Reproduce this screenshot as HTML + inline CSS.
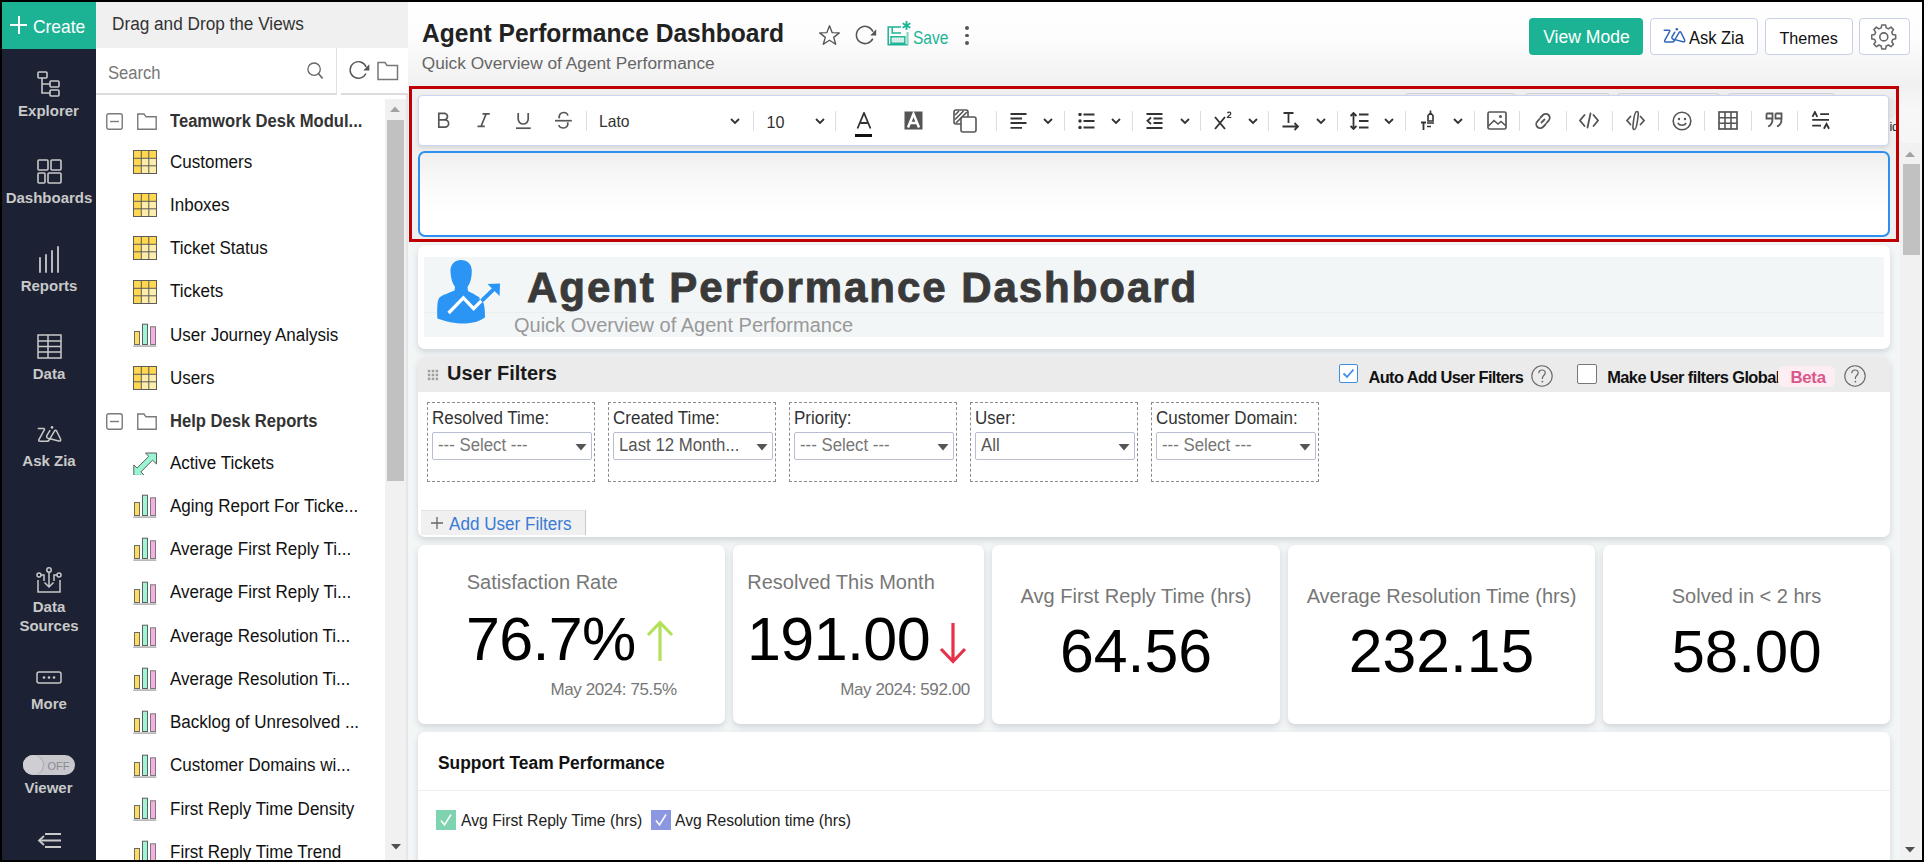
<!DOCTYPE html>
<html><head><meta charset="utf-8"><title>Agent Performance Dashboard</title>
<style>
html,body{margin:0;padding:0;width:1924px;height:862px;overflow:hidden;background:#000;}
body{position:relative;font-family:"Liberation Sans",sans-serif;}
.t{position:absolute;white-space:nowrap;}
.r{position:absolute;display:block;}
</style></head><body>
<div class="r" style="left:0px;top:0px;width:1924px;height:862px;background:#000;"></div>
<div class="r" style="left:2px;top:2px;width:1920px;height:858px;background:#fff;"></div>
<div class="r" style="left:2px;top:2px;width:94px;height:858px;background:#1c2233;"></div>
<div class="r" style="left:2px;top:2px;width:94px;height:47px;background:#1bb394;"></div>
<div class="r" style="left:10px;top:24px;width:17px;height:2px;background:#fff;"></div>
<div class="r" style="left:17.5px;top:16px;width:2px;height:18px;background:#fff;"></div>
<div class="t" style="left:33px;top:16.62px;font-size:19px;line-height:19px;color:#fff;font-weight:400;transform:scaleX(0.916);transform-origin:0 0;">Create</div>
<svg class="r" style="left:37px;top:71px;" width="26" height="27" viewBox="0 0 26 27"><g fill="none" stroke="#c9c9c9" stroke-width="1.6">
<rect x="1" y="1" width="9" height="6" rx="1"/><rect x="13" y="10" width="9" height="6" rx="1"/><rect x="13" y="19" width="9" height="6" rx="1"/>
<path d="M5 7 V22 H13 M5 13 H13"/></g></svg>
<div class="t" style="left:48.5px;transform:translateX(-50%);top:103.00px;font-size:15px;line-height:15px;color:#c9c9c9;font-weight:700;">Explorer</div>
<svg class="r" style="left:37px;top:159px;" width="25" height="25" viewBox="0 0 25 25"><g fill="none" stroke="#c9c9c9" stroke-width="1.6">
<rect x="1" y="1" width="10" height="10" rx="1"/><rect x="14" y="1" width="10" height="10" rx="1"/>
<rect x="1" y="14" width="7" height="10" rx="1"/><rect x="11" y="14" width="13" height="10" rx="1"/></g></svg>
<div class="t" style="left:49px;transform:translateX(-50%);top:190.30px;font-size:15px;line-height:15px;color:#c9c9c9;font-weight:700;">Dashboards</div>
<svg class="r" style="left:38px;top:246px;" width="22" height="27" viewBox="0 0 22 27"><g stroke="#c9c9c9" stroke-width="1.8" stroke-linecap="round">
<path d="M2 12 V26 M8 9 V26 M14 5 V26 M20 1 V26"/></g></svg>
<div class="t" style="left:49px;transform:translateX(-50%);top:278.30px;font-size:15px;line-height:15px;color:#c9c9c9;font-weight:700;">Reports</div>
<svg class="r" style="left:37px;top:334px;" width="25" height="25" viewBox="0 0 25 25"><g fill="none" stroke="#c9c9c9" stroke-width="1.5">
<rect x="1" y="1" width="23" height="23"/><path d="M1 7 H24 M1 12.5 H24 M1 18 H24 M11 1 V24"/></g></svg>
<div class="t" style="left:49px;transform:translateX(-50%);top:365.80px;font-size:15px;line-height:15px;color:#c9c9c9;font-weight:700;">Data</div>
<svg class="r" style="left:37px;top:425px;" width="26" height="19" viewBox="0 0 26 19"><g fill="none" stroke="#c9c9c9" stroke-width="1.5" stroke-linejoin="round" stroke-linecap="round">
<path d="M1.3 3.6 H6.6 Q7.9 3.6 7.3 4.8 L1.9 14.6 Q1.2 16.3 3 16.3 H10.2 Q11 16.3 11.5 15.5"/>
<path d="M12.8 5.6 L9.8 10.6 Q9.1 12.6 11.4 13.4 L13 14"/>
<path d="M11.6 15.8 L17.6 5.8 Q18.6 4.4 19.6 6 L23.5 14 Q24.3 16.4 21.7 16 L13 13.7"/></g>
<circle cx="15" cy="2.4" r="1.3" fill="#c9c9c9"/></svg>
<div class="t" style="left:49px;transform:translateX(-50%);top:453.30px;font-size:15px;line-height:15px;color:#c9c9c9;font-weight:700;">Ask Zia</div>
<svg class="r" style="left:36px;top:567px;" width="26" height="27" viewBox="0 0 26 27"><g fill="none" stroke="#c9c9c9" stroke-width="1.5">
<circle cx="13" cy="3" r="2.2"/><path d="M13 5.2 V20 M8.5 15.5 L13 20 L17.5 15.5"/>
<circle cx="3" cy="8" r="2"/><path d="M5 8 H8 V14"/><circle cx="23" cy="8" r="2"/><path d="M21 8 H18 V14"/>
<path d="M2 13 V25 H24 V13"/></g></svg>
<div class="t" style="left:49px;transform:translateX(-50%);top:598.90px;font-size:15px;line-height:15px;color:#c9c9c9;font-weight:700;">Data</div>
<div class="t" style="left:49px;transform:translateX(-50%);top:617.80px;font-size:15px;line-height:15px;color:#c9c9c9;font-weight:700;">Sources</div>
<svg class="r" style="left:36px;top:671px;" width="26" height="13" viewBox="0 0 26 13"><g fill="none" stroke="#c9c9c9" stroke-width="1.5"><rect x="1" y="1" width="24" height="11" rx="2"/></g>
<g fill="#c9c9c9"><circle cx="8" cy="6.5" r="1.3"/><circle cx="13" cy="6.5" r="1.3"/><circle cx="18" cy="6.5" r="1.3"/></g></svg>
<div class="t" style="left:49px;transform:translateX(-50%);top:695.70px;font-size:15px;line-height:15px;color:#c9c9c9;font-weight:700;">More</div>
<div class="r" style="left:23px;top:755px;width:52px;height:20px;background:#c8c8cc;border-radius:10px;"></div>
<div class="r" style="left:23px;top:755px;width:20px;height:20px;background:#cfcfd3;border-radius:10px;box-shadow:1px 0 1px rgba(0,0,0,.15);"></div>
<div class="t" style="left:47.5px;top:760.69px;font-size:11px;line-height:11px;color:#8b8b92;font-weight:400;">OFF</div>
<div class="t" style="left:48.5px;transform:translateX(-50%);top:780.10px;font-size:15px;line-height:15px;color:#c9c9c9;font-weight:700;">Viewer</div>
<svg class="r" style="left:37px;top:832px;" width="25" height="17" viewBox="0 0 25 17"><g stroke="#c9c9c9" stroke-width="1.8" fill="none">
<path d="M8 2 H24 M2 8.5 H24 M8 15 H24"/><path d="M7 4 L2 8.5 L7 13"/></g></svg>
<div class="r" style="left:96px;top:2px;width:312px;height:46px;background:#f0f0f0;"></div>
<div class="t" style="left:112.3px;top:15.36px;font-size:18px;line-height:18px;color:#333;font-weight:400;transform:scaleX(0.955);transform-origin:0 0;">Drag and Drop the Views</div>
<div class="r" style="left:96px;top:93px;width:241px;height:1.5px;background:#dcdcdc;"></div>
<div class="r" style="left:341px;top:93px;width:67px;height:1.5px;background:#dcdcdc;"></div>
<div class="r" style="left:336px;top:48px;width:1px;height:46px;background:#dfe1e3;"></div>
<div class="t" style="left:108.4px;top:63.76px;font-size:18px;line-height:18px;color:#777;font-weight:400;transform:scaleX(0.922);transform-origin:0 0;">Search</div>
<svg class="r" style="left:306px;top:61px;" width="18" height="19" viewBox="0 0 18 19"><g fill="none" stroke="#666" stroke-width="1.3"><circle cx="8.1" cy="8.2" r="6.2"/><path d="M12.6 12.7 L16.6 17.5" stroke-width="1.7"/></g></svg>
<svg class="r" style="left:348px;top:60px;" width="24" height="22" viewBox="0 0 24 22"><path d="M17.92 13.51 A8.3 8.3 0 1 1 18.10 6.89" fill="none" stroke="#555" stroke-width="1.4"/><path d="M21.30 4.20 V10.60 H15.30 Z" fill="#555"/></svg>
<svg class="r" style="left:377px;top:61px;" width="22" height="20" viewBox="0 0 22 20"><path d="M1 1.5 H8 L10 4.5 H20.5 V18.5 H1 Z" fill="none" stroke="#777" stroke-width="1.5"/></svg>
<div class="r" style="left:385px;top:99px;width:21px;height:761px;background:#f1f1f1;"></div>
<div class="r" style="left:406px;top:95px;width:2px;height:765px;background:#e6e6e6;"></div>
<div class="r" style="left:387px;top:120px;width:17px;height:361px;background:#c1c1c1;"></div>
<svg class="r" style="left:389px;top:105px;" width="12" height="8" viewBox="0 0 12 8"><path d="M1 7 L6 1.5 L11 7 Z" fill="#a3a3a3"/></svg>
<svg class="r" style="left:390px;top:843px;" width="12" height="8" viewBox="0 0 12 8"><path d="M1 1 L6 6.5 L11 1 Z" fill="#505050"/></svg>
<svg class="r" style="left:106px;top:113px;" width="17" height="17" viewBox="0 0 17 17"><rect x="0.75" y="0.75" width="15.5" height="15.5" rx="2" fill="none" stroke="#7a7a7a" stroke-width="1.4"/><path d="M4 8.5 H13" stroke="#7a7a7a" stroke-width="1.4"/></svg>
<svg class="r" style="left:137px;top:113px;" width="20" height="17" viewBox="0 0 20 17"><path d="M0.75 1 H7 L9 3.8 H19.2 V16.2 H0.75 Z" fill="none" stroke="#7a7a7a" stroke-width="1.4"/></svg>
<div class="t" style="left:169.7px;top:111.56px;font-size:18px;line-height:18px;color:#333;font-weight:700;transform:scaleX(0.922);transform-origin:0 0;">Teamwork Desk Modul...</div>
<svg class="r" style="left:133px;top:150px;" width="24" height="24" viewBox="0 0 24 24"><rect x="0.5" y="0.5" width="23" height="23" fill="#fdedab" stroke="#5c5c5c" stroke-width="1"/>
<rect x="1" y="1" width="7" height="22" fill="#ffd850"/><rect x="1" y="1" width="22" height="7" fill="#ffd850"/>
<g stroke="#5c5c5c" stroke-width="1"><path d="M8.3 1 V23 M15.8 1 V23 M1 8.3 H23 M1 15.8 H23"/></g></svg>
<div class="t" style="left:169.7px;top:152.76px;font-size:18px;line-height:18px;color:#111;font-weight:400;transform:scaleX(0.945);transform-origin:0 0;">Customers</div>
<svg class="r" style="left:133px;top:193px;" width="24" height="24" viewBox="0 0 24 24"><rect x="0.5" y="0.5" width="23" height="23" fill="#fdedab" stroke="#5c5c5c" stroke-width="1"/>
<rect x="1" y="1" width="7" height="22" fill="#ffd850"/><rect x="1" y="1" width="22" height="7" fill="#ffd850"/>
<g stroke="#5c5c5c" stroke-width="1"><path d="M8.3 1 V23 M15.8 1 V23 M1 8.3 H23 M1 15.8 H23"/></g></svg>
<div class="t" style="left:169.7px;top:195.96px;font-size:18px;line-height:18px;color:#111;font-weight:400;transform:scaleX(0.945);transform-origin:0 0;">Inboxes</div>
<svg class="r" style="left:133px;top:236px;" width="24" height="24" viewBox="0 0 24 24"><rect x="0.5" y="0.5" width="23" height="23" fill="#fdedab" stroke="#5c5c5c" stroke-width="1"/>
<rect x="1" y="1" width="7" height="22" fill="#ffd850"/><rect x="1" y="1" width="22" height="7" fill="#ffd850"/>
<g stroke="#5c5c5c" stroke-width="1"><path d="M8.3 1 V23 M15.8 1 V23 M1 8.3 H23 M1 15.8 H23"/></g></svg>
<div class="t" style="left:169.7px;top:239.16px;font-size:18px;line-height:18px;color:#111;font-weight:400;transform:scaleX(0.945);transform-origin:0 0;">Ticket Status</div>
<svg class="r" style="left:133px;top:280px;" width="24" height="24" viewBox="0 0 24 24"><rect x="0.5" y="0.5" width="23" height="23" fill="#fdedab" stroke="#5c5c5c" stroke-width="1"/>
<rect x="1" y="1" width="7" height="22" fill="#ffd850"/><rect x="1" y="1" width="22" height="7" fill="#ffd850"/>
<g stroke="#5c5c5c" stroke-width="1"><path d="M8.3 1 V23 M15.8 1 V23 M1 8.3 H23 M1 15.8 H23"/></g></svg>
<div class="t" style="left:169.7px;top:282.36px;font-size:18px;line-height:18px;color:#111;font-weight:400;transform:scaleX(0.945);transform-origin:0 0;">Tickets</div>
<svg class="r" style="left:133px;top:323px;" width="24" height="24" viewBox="0 0 24 24"><rect x="1.5" y="8.5" width="5" height="13" fill="#ffdc5c" stroke="#6b6b6b" stroke-width="1"/>
<rect x="9.5" y="1.2" width="5" height="20.3" fill="#a0f5d6" stroke="#5f5f5f" stroke-width="1"/>
<rect x="17.5" y="3.8" width="5" height="17.7" fill="#f7aee0" stroke="#7a7a7a" stroke-width="1"/>
<rect x="0.3" y="22.4" width="23" height="1.4" fill="#a8a8a8"/></svg>
<div class="t" style="left:169.7px;top:325.56px;font-size:18px;line-height:18px;color:#111;font-weight:400;transform:scaleX(0.945);transform-origin:0 0;">User Journey Analysis</div>
<svg class="r" style="left:133px;top:366px;" width="24" height="24" viewBox="0 0 24 24"><rect x="0.5" y="0.5" width="23" height="23" fill="#fdedab" stroke="#5c5c5c" stroke-width="1"/>
<rect x="1" y="1" width="7" height="22" fill="#ffd850"/><rect x="1" y="1" width="22" height="7" fill="#ffd850"/>
<g stroke="#5c5c5c" stroke-width="1"><path d="M8.3 1 V23 M15.8 1 V23 M1 8.3 H23 M1 15.8 H23"/></g></svg>
<div class="t" style="left:169.7px;top:368.76px;font-size:18px;line-height:18px;color:#111;font-weight:400;transform:scaleX(0.945);transform-origin:0 0;">Users</div>
<svg class="r" style="left:106px;top:413px;" width="17" height="17" viewBox="0 0 17 17"><rect x="0.75" y="0.75" width="15.5" height="15.5" rx="2" fill="none" stroke="#7a7a7a" stroke-width="1.4"/><path d="M4 8.5 H13" stroke="#7a7a7a" stroke-width="1.4"/></svg>
<svg class="r" style="left:137px;top:413px;" width="20" height="17" viewBox="0 0 20 17"><path d="M0.75 1 H7 L9 3.8 H19.2 V16.2 H0.75 Z" fill="none" stroke="#7a7a7a" stroke-width="1.4"/></svg>
<div class="t" style="left:169.7px;top:411.96px;font-size:18px;line-height:18px;color:#333;font-weight:700;transform:scaleX(0.922);transform-origin:0 0;">Help Desk Reports</div>
<svg class="r" style="left:133px;top:451px;" width="24" height="24" viewBox="0 0 24 24"><path d="M23.5 2 H12.5 L15.8 5.4 L4 17.1 L0.8 13.9 V24.4 H11.3 L7.8 21 L19.5 9.2 L23.5 13 Z" fill="#9af5d3" stroke="#5e5e5e" stroke-width="1" stroke-linejoin="miter"/></svg>
<div class="t" style="left:169.7px;top:453.56px;font-size:18px;line-height:18px;color:#111;font-weight:400;transform:scaleX(0.945);transform-origin:0 0;">Active Tickets</div>
<svg class="r" style="left:133px;top:494px;" width="24" height="24" viewBox="0 0 24 24"><rect x="1.5" y="8.5" width="5" height="13" fill="#ffdc5c" stroke="#6b6b6b" stroke-width="1"/>
<rect x="9.5" y="1.2" width="5" height="20.3" fill="#a0f5d6" stroke="#5f5f5f" stroke-width="1"/>
<rect x="17.5" y="3.8" width="5" height="17.7" fill="#f7aee0" stroke="#7a7a7a" stroke-width="1"/>
<rect x="0.3" y="22.4" width="23" height="1.4" fill="#a8a8a8"/></svg>
<div class="t" style="left:169.7px;top:496.81px;font-size:18px;line-height:18px;color:#111;font-weight:400;transform:scaleX(0.945);transform-origin:0 0;">Aging Report For Ticke...</div>
<svg class="r" style="left:133px;top:537px;" width="24" height="24" viewBox="0 0 24 24"><rect x="1.5" y="8.5" width="5" height="13" fill="#ffdc5c" stroke="#6b6b6b" stroke-width="1"/>
<rect x="9.5" y="1.2" width="5" height="20.3" fill="#a0f5d6" stroke="#5f5f5f" stroke-width="1"/>
<rect x="17.5" y="3.8" width="5" height="17.7" fill="#f7aee0" stroke="#7a7a7a" stroke-width="1"/>
<rect x="0.3" y="22.4" width="23" height="1.4" fill="#a8a8a8"/></svg>
<div class="t" style="left:169.7px;top:540.06px;font-size:18px;line-height:18px;color:#111;font-weight:400;transform:scaleX(0.945);transform-origin:0 0;">Average First Reply Ti...</div>
<svg class="r" style="left:133px;top:581px;" width="24" height="24" viewBox="0 0 24 24"><rect x="1.5" y="8.5" width="5" height="13" fill="#ffdc5c" stroke="#6b6b6b" stroke-width="1"/>
<rect x="9.5" y="1.2" width="5" height="20.3" fill="#a0f5d6" stroke="#5f5f5f" stroke-width="1"/>
<rect x="17.5" y="3.8" width="5" height="17.7" fill="#f7aee0" stroke="#7a7a7a" stroke-width="1"/>
<rect x="0.3" y="22.4" width="23" height="1.4" fill="#a8a8a8"/></svg>
<div class="t" style="left:169.7px;top:583.31px;font-size:18px;line-height:18px;color:#111;font-weight:400;transform:scaleX(0.945);transform-origin:0 0;">Average First Reply Ti...</div>
<svg class="r" style="left:133px;top:624px;" width="24" height="24" viewBox="0 0 24 24"><rect x="1.5" y="8.5" width="5" height="13" fill="#ffdc5c" stroke="#6b6b6b" stroke-width="1"/>
<rect x="9.5" y="1.2" width="5" height="20.3" fill="#a0f5d6" stroke="#5f5f5f" stroke-width="1"/>
<rect x="17.5" y="3.8" width="5" height="17.7" fill="#f7aee0" stroke="#7a7a7a" stroke-width="1"/>
<rect x="0.3" y="22.4" width="23" height="1.4" fill="#a8a8a8"/></svg>
<div class="t" style="left:169.7px;top:626.56px;font-size:18px;line-height:18px;color:#111;font-weight:400;transform:scaleX(0.945);transform-origin:0 0;">Average Resolution Ti...</div>
<svg class="r" style="left:133px;top:667px;" width="24" height="24" viewBox="0 0 24 24"><rect x="1.5" y="8.5" width="5" height="13" fill="#ffdc5c" stroke="#6b6b6b" stroke-width="1"/>
<rect x="9.5" y="1.2" width="5" height="20.3" fill="#a0f5d6" stroke="#5f5f5f" stroke-width="1"/>
<rect x="17.5" y="3.8" width="5" height="17.7" fill="#f7aee0" stroke="#7a7a7a" stroke-width="1"/>
<rect x="0.3" y="22.4" width="23" height="1.4" fill="#a8a8a8"/></svg>
<div class="t" style="left:169.7px;top:669.81px;font-size:18px;line-height:18px;color:#111;font-weight:400;transform:scaleX(0.945);transform-origin:0 0;">Average Resolution Ti...</div>
<svg class="r" style="left:133px;top:710px;" width="24" height="24" viewBox="0 0 24 24"><rect x="1.5" y="8.5" width="5" height="13" fill="#ffdc5c" stroke="#6b6b6b" stroke-width="1"/>
<rect x="9.5" y="1.2" width="5" height="20.3" fill="#a0f5d6" stroke="#5f5f5f" stroke-width="1"/>
<rect x="17.5" y="3.8" width="5" height="17.7" fill="#f7aee0" stroke="#7a7a7a" stroke-width="1"/>
<rect x="0.3" y="22.4" width="23" height="1.4" fill="#a8a8a8"/></svg>
<div class="t" style="left:169.7px;top:713.06px;font-size:18px;line-height:18px;color:#111;font-weight:400;transform:scaleX(0.945);transform-origin:0 0;">Backlog of Unresolved ...</div>
<svg class="r" style="left:133px;top:754px;" width="24" height="24" viewBox="0 0 24 24"><rect x="1.5" y="8.5" width="5" height="13" fill="#ffdc5c" stroke="#6b6b6b" stroke-width="1"/>
<rect x="9.5" y="1.2" width="5" height="20.3" fill="#a0f5d6" stroke="#5f5f5f" stroke-width="1"/>
<rect x="17.5" y="3.8" width="5" height="17.7" fill="#f7aee0" stroke="#7a7a7a" stroke-width="1"/>
<rect x="0.3" y="22.4" width="23" height="1.4" fill="#a8a8a8"/></svg>
<div class="t" style="left:169.7px;top:756.31px;font-size:18px;line-height:18px;color:#111;font-weight:400;transform:scaleX(0.945);transform-origin:0 0;">Customer Domains wi...</div>
<svg class="r" style="left:133px;top:797px;" width="24" height="24" viewBox="0 0 24 24"><rect x="1.5" y="8.5" width="5" height="13" fill="#ffdc5c" stroke="#6b6b6b" stroke-width="1"/>
<rect x="9.5" y="1.2" width="5" height="20.3" fill="#a0f5d6" stroke="#5f5f5f" stroke-width="1"/>
<rect x="17.5" y="3.8" width="5" height="17.7" fill="#f7aee0" stroke="#7a7a7a" stroke-width="1"/>
<rect x="0.3" y="22.4" width="23" height="1.4" fill="#a8a8a8"/></svg>
<div class="t" style="left:169.7px;top:799.56px;font-size:18px;line-height:18px;color:#111;font-weight:400;transform:scaleX(0.945);transform-origin:0 0;">First Reply Time Density</div>
<svg class="r" style="left:133px;top:840px;" width="24" height="24" viewBox="0 0 24 24"><rect x="1.5" y="8.5" width="5" height="13" fill="#ffdc5c" stroke="#6b6b6b" stroke-width="1"/>
<rect x="9.5" y="1.2" width="5" height="20.3" fill="#a0f5d6" stroke="#5f5f5f" stroke-width="1"/>
<rect x="17.5" y="3.8" width="5" height="17.7" fill="#f7aee0" stroke="#7a7a7a" stroke-width="1"/>
<rect x="0.3" y="22.4" width="23" height="1.4" fill="#a8a8a8"/></svg>
<div class="t" style="left:169.7px;top:842.81px;font-size:18px;line-height:18px;color:#111;font-weight:400;transform:scaleX(0.945);transform-origin:0 0;">First Reply Time Trend</div>
<div class="r" style="left:408px;top:2px;width:1514px;height:84px;background:linear-gradient(#ffffff 0%,#fdfdfd 40%,#f0f0f0 100%);"></div>
<div class="r" style="left:408px;top:86px;width:1514px;height:774px;background:#f3f6f7;"></div>
<div class="t" style="left:422.3px;top:19.57px;font-size:26.5px;line-height:26.5px;color:#222;font-weight:700;transform:scaleX(0.928);transform-origin:0 0;">Agent Performance Dashboard</div>
<div class="t" style="left:421.7px;top:55.36px;font-size:17.3px;line-height:17.3px;color:#666;font-weight:400;">Quick Overview of Agent Performance</div>
<svg class="r" style="left:818px;top:24px;" width="23" height="22" viewBox="0 0 23 22"><path d="M11.5 1.8 L14.1 8.6 L21.3 8.9 L15.7 13.4 L17.7 20.3 L11.5 16.3 L5.3 20.3 L7.3 13.4 L1.7 8.9 L8.9 8.6 Z" fill="none" stroke="#555" stroke-width="1.35" stroke-linejoin="round"/></svg>
<svg class="r" style="left:853px;top:24px;" width="26" height="23" viewBox="0 0 26 23"><path d="M19.79 14.63 A8.6 8.6 0 1 1 19.97 7.78" fill="none" stroke="#555" stroke-width="1.5"/><path d="M23.20 5.20 V11.60 H17.20 Z" fill="#555"/></svg>
<svg class="r" style="left:886px;top:20px;" width="27" height="27" viewBox="0 0 27 27"><g fill="none" stroke="#1bb394" stroke-width="1.5"><path d="M15 7 H2.2 V24.8 H21.5 V12"/><path d="M6.2 7 V13 H15"/><rect x="5" y="16.8" width="13.8" height="6.4"/></g>
<path d="M21.5 12 V24.8" stroke="#8fd8c4" stroke-width="1.6"/>
<path d="M5.6 20 H18.2" stroke="#a7e2d3" stroke-width="3.6" stroke-dasharray="1 1"/>
<g stroke="#1bb394" stroke-width="1.8"><path d="M20.5 1 V10 M16.6 3.2 L24.4 7.8 M24.4 3.2 L16.6 7.8"/></g></svg>
<div class="t" style="left:913px;top:28.84px;font-size:18.5px;line-height:18.5px;color:#1bb394;font-weight:400;transform:scaleX(0.84);transform-origin:0 0;">Save</div>
<div class="r" style="left:965.3px;top:26px;width:3.8px;height:3.8px;background:#555;border-radius:2px;"></div>
<div class="r" style="left:965.3px;top:33.5px;width:3.8px;height:3.8px;background:#555;border-radius:2px;"></div>
<div class="r" style="left:965.3px;top:41px;width:3.8px;height:3.8px;background:#555;border-radius:2px;"></div>
<div class="r" style="left:1529px;top:18px;width:114px;height:37px;background:#1bb394;border-radius:4px;"></div>
<div class="t" style="left:1586.5px;transform:translateX(-50%);top:29.10px;font-size:17.6px;line-height:17.6px;color:#fff;font-weight:400;">View Mode</div>
<div class="r" style="left:1650px;top:18px;width:108px;height:37px;box-sizing:border-box;border:1px solid #c7d0e6;border-radius:4px;background:#fff;"></div>
<svg class="r" style="left:1663px;top:27px;" width="24" height="18" viewBox="0 0 24 18"><g transform="scale(0.92)"><g fill="none" stroke="#2f66bb" stroke-width="1.6" stroke-linejoin="round" stroke-linecap="round">
<path d="M1.3 3.6 H6.6 Q7.9 3.6 7.3 4.8 L1.9 14.6 Q1.2 16.3 3 16.3 H10.2 Q11 16.3 11.5 15.5"/>
<path d="M12.8 5.6 L9.8 10.6 Q9.1 12.6 11.4 13.4 L13 14"/>
<path d="M11.6 15.8 L17.6 5.8 Q18.6 4.4 19.6 6 L23.5 14 Q24.3 16.4 21.7 16 L13 13.7"/></g>
<circle cx="15" cy="2.4" r="1.4" fill="#2f66bb"/></g></svg>
<div class="t" style="left:1689px;top:28.59px;font-size:18.2px;line-height:18.2px;color:#111;font-weight:400;transform:scaleX(0.906);transform-origin:0 0;">Ask Zia</div>
<div class="r" style="left:1765px;top:18px;width:88px;height:37px;box-sizing:border-box;border:1px solid #c7d0e6;border-radius:4px;background:#fff;"></div>
<div class="t" style="left:1808.7px;transform:translateX(-50%);top:29.79px;font-size:16.2px;line-height:16.2px;color:#111;font-weight:400;">Themes</div>
<div class="r" style="left:1859px;top:18px;width:51px;height:37px;box-sizing:border-box;border:1px solid #c7d0e6;border-radius:4px;background:#fff;"></div>
<svg class="r" style="left:1871px;top:23.7px;" width="26" height="26" viewBox="0 0 26 26"><g fill="none" stroke="#666" stroke-width="1.6" stroke-linejoin="round">
<path d="M11 1.5 H15 L15.6 4.6 L18 5.6 L20.6 3.8 L23.2 6.4 L21.4 9 L22.4 11.4 L25.5 12 V16 L22.4 16.6 L21.4 19 L23.2 21.6 L20.6 24.2 L18 22.4 L15.6 23.4 L15 26.5 H11 L10.4 23.4 L8 22.4 L5.4 24.2 L2.8 21.6 L4.6 19 L3.6 16.6 L0.5 16 V12 L3.6 11.4 L4.6 9 L2.8 6.4 L5.4 3.8 L8 5.6 L10.4 4.6 Z" transform="translate(0.2,-0.5) scale(0.96)"/>
<circle cx="12.8" cy="12.9" r="4"/></g></svg>
<div class="r" style="left:1899px;top:86px;width:23px;height:57px;background:linear-gradient(#f1f1f1,#f7f7f7 40%,#f6f6f6);"></div>
<div class="r" style="left:1900px;top:143px;width:21px;height:717px;background:#f1f1f1;"></div>
<div class="r" style="left:1903px;top:164px;width:17px;height:91px;background:#c1c1c1;"></div>
<svg class="r" style="left:1904px;top:150px;" width="12" height="8" viewBox="0 0 12 8"><path d="M1 7 L6 1.5 L11 7 Z" fill="#a3a3a3"/></svg>
<svg class="r" style="left:1904px;top:846px;" width="12" height="8" viewBox="0 0 12 8"><path d="M1 1 L6 6.5 L11 1 Z" fill="#505050"/></svg>
<div class="r" style="left:409px;top:86px;width:1490px;height:156px;box-sizing:border-box;border:3px solid #c00000;background:#efefef;"></div>
<div class="r" style="left:1405px;top:93px;width:111px;height:8px;box-sizing:border-box;border:1px solid #d0d4dc;border-bottom:none;border-radius:4px 4px 0 0;background:#ececec;"></div>
<div class="r" style="left:1525px;top:93px;width:85px;height:8px;box-sizing:border-box;border:1px solid #d0d4dc;border-bottom:none;border-radius:4px 4px 0 0;background:#ececec;"></div>
<div class="r" style="left:1617px;top:93px;width:103px;height:8px;box-sizing:border-box;border:1px solid #d0d4dc;border-bottom:none;border-radius:4px 4px 0 0;background:#ececec;"></div>
<div class="r" style="left:1727px;top:93px;width:108px;height:8px;box-sizing:border-box;border:1px solid #d0d4dc;border-bottom:none;border-radius:4px 4px 0 0;background:#ececec;"></div>
<div class="r" style="left:1880px;top:97px;width:17px;height:22px;background:#e9e9e9;border-radius:50%;"></div>
<div class="t" style="left:1889.5px;top:121.42px;font-size:12.5px;line-height:12.5px;color:#222;font-weight:400;letter-spacing:-0.2px;">id</div>
<div class="r" style="left:1896px;top:86px;width:3px;height:156px;background:#c00000;"></div>
<div class="r" style="left:418px;top:95px;width:1471px;height:51px;box-sizing:border-box;border:1px solid #cbd5ee;border-radius:4px;background:#fff;box-shadow:0 2px 4px rgba(0,0,0,.10);"></div>
<div class="r" style="left:418px;top:151px;width:1472px;height:86px;box-sizing:border-box;border:2px solid #2f8ff0;border-radius:7px;background:linear-gradient(#efefef 0%,#f9f9f9 35%,#fff 75%);"></div>
<svg class="r" style="left:436px;top:112px;" width="16" height="17" viewBox="0 0 16 17"><path d="M2.8 1.3 H8.2 a3.3 3.3 0 0 1 0 6.6 H2.8 Z M2.8 7.9 H9 a3.6 3.6 0 0 1 0 7.2 H2.8 Z" fill="none" stroke="#555" stroke-width="1.7"/></svg>
<svg class="r" style="left:476px;top:112px;" width="16" height="17" viewBox="0 0 16 17"><path d="M6.5 1.8 H13.8 M1.5 14.3 H8.8 M10.2 1.8 L5.1 14.3" fill="none" stroke="#555" stroke-width="1.7"/></svg>
<svg class="r" style="left:515px;top:112px;" width="17" height="18" viewBox="0 0 17 18"><path d="M3.2 1 V7 a5 5 0 0 0 10 0 V1" fill="none" stroke="#555" stroke-width="1.7"/><path d="M1 16.2 H15.7" stroke="#555" stroke-width="1.7"/></svg>
<svg class="r" style="left:554px;top:111px;" width="19" height="19" viewBox="0 0 19 19"><path d="M5.3 7.3 C4.6 3.5 7 1.5 9.5 1.5 C12 1.5 13.6 3 13.8 4.6 M13.7 11.3 C14.5 15 12 17 9.5 17 C7 17 5.2 15.6 5 14" fill="none" stroke="#555" stroke-width="1.7"/><path d="M1 9.7 H17.8" stroke="#555" stroke-width="1.7"/></svg>
<div class="r" style="left:586px;top:111px;width:1px;height:20px;background:#dedede;"></div>
<div class="r" style="left:753px;top:111px;width:1px;height:20px;background:#dedede;"></div>
<div class="r" style="left:835px;top:111px;width:1px;height:20px;background:#dedede;"></div>
<div class="r" style="left:996px;top:111px;width:1px;height:20px;background:#dedede;"></div>
<div class="r" style="left:1064px;top:111px;width:1px;height:20px;background:#dedede;"></div>
<div class="r" style="left:1132px;top:111px;width:1px;height:20px;background:#dedede;"></div>
<div class="r" style="left:1200px;top:111px;width:1px;height:20px;background:#dedede;"></div>
<div class="r" style="left:1268px;top:111px;width:1px;height:20px;background:#dedede;"></div>
<div class="r" style="left:1337px;top:111px;width:1px;height:20px;background:#dedede;"></div>
<div class="r" style="left:1405px;top:111px;width:1px;height:20px;background:#dedede;"></div>
<div class="r" style="left:1474px;top:111px;width:1px;height:20px;background:#dedede;"></div>
<div class="r" style="left:1519px;top:111px;width:1px;height:20px;background:#dedede;"></div>
<div class="r" style="left:1566px;top:111px;width:1px;height:20px;background:#dedede;"></div>
<div class="r" style="left:1612px;top:111px;width:1px;height:20px;background:#dedede;"></div>
<div class="r" style="left:1658px;top:111px;width:1px;height:20px;background:#dedede;"></div>
<div class="r" style="left:1704px;top:111px;width:1px;height:20px;background:#dedede;"></div>
<div class="r" style="left:1751px;top:111px;width:1px;height:20px;background:#dedede;"></div>
<div class="r" style="left:1797px;top:111px;width:1px;height:20px;background:#dedede;"></div>
<div class="t" style="left:598.8px;top:113.33px;font-size:16.5px;line-height:16.5px;color:#333;font-weight:400;transform:scaleX(0.95);transform-origin:0 0;">Lato</div>
<div class="t" style="left:766.4px;top:113.59px;font-size:16.2px;line-height:16.2px;color:#333;font-weight:400;">10</div>
<svg class="r" style="left:730px;top:118px;" width="10" height="7" viewBox="0 0 10 7"><path d="M1 1 L5 5 L9 1" fill="none" stroke="#333" stroke-width="1.8"/></svg>
<svg class="r" style="left:815px;top:118px;" width="10" height="7" viewBox="0 0 10 7"><path d="M1 1 L5 5 L9 1" fill="none" stroke="#333" stroke-width="1.8"/></svg>
<svg class="r" style="left:1043px;top:118px;" width="10" height="7" viewBox="0 0 10 7"><path d="M1 1 L5 5 L9 1" fill="none" stroke="#333" stroke-width="1.8"/></svg>
<svg class="r" style="left:1111px;top:118px;" width="10" height="7" viewBox="0 0 10 7"><path d="M1 1 L5 5 L9 1" fill="none" stroke="#333" stroke-width="1.8"/></svg>
<svg class="r" style="left:1180px;top:118px;" width="10" height="7" viewBox="0 0 10 7"><path d="M1 1 L5 5 L9 1" fill="none" stroke="#333" stroke-width="1.8"/></svg>
<svg class="r" style="left:1248px;top:118px;" width="10" height="7" viewBox="0 0 10 7"><path d="M1 1 L5 5 L9 1" fill="none" stroke="#333" stroke-width="1.8"/></svg>
<svg class="r" style="left:1316px;top:118px;" width="10" height="7" viewBox="0 0 10 7"><path d="M1 1 L5 5 L9 1" fill="none" stroke="#333" stroke-width="1.8"/></svg>
<svg class="r" style="left:1384px;top:118px;" width="10" height="7" viewBox="0 0 10 7"><path d="M1 1 L5 5 L9 1" fill="none" stroke="#333" stroke-width="1.8"/></svg>
<svg class="r" style="left:1453px;top:118px;" width="10" height="7" viewBox="0 0 10 7"><path d="M1 1 L5 5 L9 1" fill="none" stroke="#333" stroke-width="1.8"/></svg>
<svg class="r" style="left:856px;top:112px;" width="16" height="17" viewBox="0 0 16 17"><path d="M1.5 16.5 L8 1 L14.5 16.5 M4 11 H12" fill="none" stroke="#333" stroke-width="1.8"/></svg>
<div class="r" style="left:855px;top:134px;width:17px;height:3px;background:#111;"></div>
<svg class="r" style="left:904px;top:111px;" width="19" height="19" viewBox="0 0 19 19"><rect x="0.5" y="0.5" width="18" height="18" fill="#555"/><path d="M4 16.5 L9.5 3 L15 16.5 M6.2 12 H12.8" fill="none" stroke="#fff" stroke-width="2.5"/></svg>
<svg class="r" style="left:953px;top:109px;" width="24" height="24" viewBox="0 0 24 24"><rect x="1" y="1" width="14" height="14" rx="2" fill="none" stroke="#555" stroke-width="1.6"/>
<path d="M2 6 L6 2 M2 10.5 L10.5 2 M3 14 L14 3" stroke="#555" stroke-width="1.6"/>
<rect x="8" y="8" width="15" height="15" rx="2" fill="#fff" stroke="#555" stroke-width="1.6"/></svg>
<svg class="r" style="left:1010px;top:113px;" width="17" height="16" viewBox="0 0 17 16"><path d="M0.5 1 H16.5 M0.5 5.5 H12 M0.5 10 H16.5 M0.5 14.8 H12" stroke="#333" stroke-width="1.8"/></svg>
<svg class="r" style="left:1078px;top:113px;" width="17" height="16" viewBox="0 0 17 16"><path d="M5.5 1.5 H16.5 M5.5 8 H16.5 M5.5 14.5 H16.5" stroke="#333" stroke-width="1.8"/><g fill="#333"><circle cx="2" cy="1.5" r="1.7"/><circle cx="2" cy="8" r="1.7"/><circle cx="2" cy="14.5" r="1.7"/></g></svg>
<svg class="r" style="left:1146px;top:113px;" width="17" height="16" viewBox="0 0 17 16"><path d="M0.5 1 H16.5 M7.5 5.5 H16.5 M7.5 10 H16.5 M0.5 15 H16.5 M5 4.5 L1.5 7.8 L5 11" fill="none" stroke="#333" stroke-width="1.8"/></svg>
<svg class="r" style="left:1214px;top:111px;" width="19" height="19" viewBox="0 0 19 19"><path d="M1 6 L11 18 M11 6 L1 18" stroke="#333" stroke-width="1.9"/><path d="M13.5 2.2 C14 0.8 16.8 0.8 16.8 2.4 C16.8 3.8 14 5 13.5 6.5 H17.3" fill="none" stroke="#333" stroke-width="1.2"/></svg>
<svg class="r" style="left:1282px;top:112px;" width="18" height="19" viewBox="0 0 18 19"><path d="M1.5 1 H11.5 M6.5 1 V11 M0.5 14.5 H16 M12.5 11 L16 14.5 L12.5 18" fill="none" stroke="#333" stroke-width="1.8"/></svg>
<svg class="r" style="left:1350px;top:112px;" width="19" height="18" viewBox="0 0 19 18"><path d="M3.5 1 V17 M0.5 4 L3.5 1 L6.5 4 M0.5 14 L3.5 17 L6.5 14 M9 2.5 H18.5 M9 9 H18.5 M9 15.5 H18.5" fill="none" stroke="#333" stroke-width="1.8"/></svg>
<svg class="r" style="left:1420px;top:109px;" width="18" height="22" viewBox="0 0 18 22"><path d="M10.5 1.5 V4 M8 12 V6.5 L10.5 4 L13 6.5 V12 Z" fill="none" stroke="#333" stroke-width="1.6"/><path d="M7 14 H14 M7 17.5 H11" stroke="#333" stroke-width="1.6"/><path d="M1 13.5 H6 M3.5 13.5 V21" stroke="#333" stroke-width="1.8"/></svg>
<svg class="r" style="left:1487px;top:111px;" width="20" height="19" viewBox="0 0 20 19"><rect x="1" y="1" width="18" height="17" rx="1.5" fill="none" stroke="#555" stroke-width="1.7"/><path d="M1.5 15 L7 9.5 L11 13 L14 10.5 L18.5 14.5" fill="none" stroke="#555" stroke-width="1.6"/><circle cx="13.5" cy="5.5" r="1.5" fill="#555"/></svg>
<svg class="r" style="left:1533px;top:111px;" width="20" height="20" viewBox="0 0 20 20"><path d="M8.5 11.5 L11.5 8.5 M7.5 6.5 L10 4 A3.6 3.6 0 0 1 15.6 9.6 L13.5 12 M12.5 13.5 L10 16 A3.6 3.6 0 0 1 4.4 10.4 L6.5 8" fill="none" stroke="#555" stroke-width="1.8" stroke-linecap="round"/></svg>
<svg class="r" style="left:1579px;top:112px;" width="20" height="17" viewBox="0 0 20 17"><path d="M5.5 3 L1 8.5 L5.5 14 M14.5 3 L19 8.5 L14.5 14 M11.5 1.5 L8.5 15.5" fill="none" stroke="#555" stroke-width="1.8" stroke-linecap="round"/></svg>
<svg class="r" style="left:1626px;top:110px;" width="19" height="21" viewBox="0 0 19 21"><path d="M4.5 6.5 L1 10.5 L4.5 14.5 M14.5 6.5 L18 10.5 L14.5 14.5" fill="none" stroke="#555" stroke-width="1.7" stroke-linecap="round"/><path d="M10.8 1.5 C13 1.5 12.4 4 11.5 10.5 C10.7 16.5 10 19.5 8.3 19.5 C6.3 19.5 6.8 16.5 7.6 10.5 C8.4 4.5 9 1.5 10.8 1.5 Z" fill="none" stroke="#555" stroke-width="1.6"/></svg>
<svg class="r" style="left:1672px;top:111px;" width="20" height="20" viewBox="0 0 20 20"><circle cx="10" cy="10" r="8.8" fill="none" stroke="#555" stroke-width="1.6"/><circle cx="7" cy="8" r="1.2" fill="#555"/><circle cx="13" cy="8" r="1.2" fill="#555"/><path d="M5.8 12 C7.5 15 12.5 15 14.2 12" fill="none" stroke="#555" stroke-width="1.6"/></svg>
<svg class="r" style="left:1718px;top:111px;" width="20" height="19" viewBox="0 0 20 19"><rect x="1" y="1" width="18" height="17" fill="none" stroke="#555" stroke-width="1.7"/><path d="M7 1 V18 M13 1 V18 M1 6.7 H19 M1 12.3 H19" stroke="#555" stroke-width="1.6"/></svg>
<svg class="r" style="left:1765px;top:112px;" width="19" height="16" viewBox="0 0 19 16"><path d="M1.5 1.5 H7.5 V7 C7.5 11 6 13.5 3 14.5 M10.5 1.5 H16.5 V7 C16.5 11 15 13.5 12 14.5 M1.5 1.5 V6.5 H7 M10.5 1.5 V6.5 H16" fill="none" stroke="#555" stroke-width="1.8"/></svg>
<svg class="r" style="left:1811px;top:111px;" width="20" height="20" viewBox="0 0 20 20"><path d="M1.5 5.8 L3.9 1 L6.3 5.8 M9.2 3.2 H18 M1.2 8.8 H18 M1.2 14.7 H10 M12.9 17.8 L15.5 13 L18.1 17.8" fill="none" stroke="#333" stroke-width="1.8"/></svg>
<div class="r" style="left:418px;top:245px;width:1472px;height:104px;background:#fff;border-radius:7px;box-shadow:0 3px 6px rgba(40,50,60,.17);"></div>
<div class="r" style="left:424px;top:257px;width:1460px;height:80px;background:#f3f6f7;"></div>
<div class="r" style="left:424px;top:312px;width:1460px;height:1px;background:#ebeff1;"></div>
<svg class="r" style="left:430px;top:252px;" width="80" height="80" viewBox="0 0 80 80"><path fill="#2b95f5" d="M31 8 C24 8 20 13 20.5 20 C21 26 22 31 25 35 L24.5 38.5 C20 40.5 12 43 9 46 C7 50 7 58 7.4 66.5 C16 70 28 72 36 71.5 C44 71 50 69 55 65.5 C55 58 54.5 53 53 49 C50 45 44 42 38 39 L37.5 35 C40.5 31 41.8 25 41.8 19 C41.8 12 37.5 8 31 8 Z"/>
<path d="M18.6 61 L33.4 45.8 L43.6 56.6 L53 47.2" fill="none" stroke="#fff" stroke-width="3.3"/>
<path d="M51.5 49 L64.5 36.5" fill="none" stroke="#fff" stroke-width="6.5"/>
<path d="M51.5 49 L64.5 36.5" fill="none" stroke="#2b95f5" stroke-width="4"/>
<path d="M57.5 32 L70 31.4 L69.6 44 Z" fill="#2b95f5"/></svg>
<div class="t" style="left:527px;top:266.85px;font-size:42px;line-height:42px;color:#3a3a3a;font-weight:700;letter-spacing:1.95px;-webkit-text-stroke:0.9px #3a3a3a;">Agent Performance Dashboard</div>
<div class="t" style="left:514px;top:315.37px;font-size:20px;line-height:20px;color:#999;font-weight:400;">Quick Overview of Agent Performance</div>
<div class="r" style="left:418px;top:357px;width:1472px;height:180px;background:#fff;border-radius:7px;box-shadow:0 3px 6px rgba(40,50,60,.17);"></div>
<div class="r" style="left:418px;top:357px;width:1472px;height:35px;background:#ebebeb;border-radius:7px 7px 0 0;"></div>
<svg class="r" style="left:427px;top:369px;" width="13" height="13" viewBox="0 0 13 13"><g fill="#a0a0a0"><rect x="0.8" y="0.8" width="2.5" height="2.5"/><rect x="0.8" y="4.7" width="2.5" height="2.5"/><rect x="0.8" y="8.6" width="2.5" height="2.5"/><rect x="4.7" y="0.8" width="2.5" height="2.5"/><rect x="4.7" y="4.7" width="2.5" height="2.5"/><rect x="4.7" y="8.6" width="2.5" height="2.5"/><rect x="8.6" y="0.8" width="2.5" height="2.5"/><rect x="8.6" y="4.7" width="2.5" height="2.5"/><rect x="8.6" y="8.6" width="2.5" height="2.5"/></g></svg>
<div class="t" style="left:446.5px;top:363.28px;font-size:20.7px;line-height:20.7px;color:#1a1a1a;font-weight:700;transform:scaleX(0.966);transform-origin:0 0;">User Filters</div>
<div class="r" style="left:1339px;top:364px;width:19px;height:19px;box-sizing:border-box;border:1.5px solid #3d8fe6;border-radius:2px;background:#fff;"></div>
<svg class="r" style="left:1339px;top:364px;" width="19" height="19" viewBox="0 0 19 19"><path d="M4.5 9.5 L8 13 L14.5 5.5" fill="none" stroke="#3d8fe6" stroke-width="1.8"/></svg>
<div class="t" style="left:1368.5px;top:369.12px;font-size:16.4px;line-height:16.4px;color:#111;font-weight:700;letter-spacing:-0.62px;">Auto Add User Filters</div>
<svg class="r" style="left:1531px;top:365px;" width="22" height="22" viewBox="0 0 22 22"><circle cx="11" cy="11" r="10.2" fill="none" stroke="#666" stroke-width="1.1"/><path d="M7.8 8.2 C7.8 6 9.3 5 11 5 C12.8 5 14.2 6.2 14.2 7.9 C14.2 10 11.4 10.6 11.4 13.2 V14" fill="none" stroke="#666" stroke-width="1.2"/><circle cx="11.4" cy="16.6" r="0.9" fill="#666"/></svg>
<div class="r" style="left:1577px;top:364px;width:20px;height:20px;box-sizing:border-box;border:1.5px solid #777;border-radius:2px;background:#fff;"></div>
<div class="t" style="left:1607.3px;top:369.12px;font-size:16.4px;line-height:16.4px;color:#111;font-weight:700;letter-spacing:-0.6px;">Make User filters Global</div>
<div class="r" style="left:1778px;top:366px;width:57px;height:21px;background:#fdeef3;border-radius:6px;"></div>
<div class="t" style="left:1790.5px;top:369.78px;font-size:16.8px;line-height:16.8px;color:#d9578a;font-weight:700;letter-spacing:-0.3px;">Beta</div>
<svg class="r" style="left:1844px;top:365px;" width="22" height="22" viewBox="0 0 22 22"><circle cx="11" cy="11" r="10.2" fill="none" stroke="#666" stroke-width="1.1"/><path d="M7.8 8.2 C7.8 6 9.3 5 11 5 C12.8 5 14.2 6.2 14.2 7.9 C14.2 10 11.4 10.6 11.4 13.2 V14" fill="none" stroke="#666" stroke-width="1.2"/><circle cx="11.4" cy="16.6" r="0.9" fill="#666"/></svg>
<div class="r" style="left:427px;top:402px;width:168px;height:80px;box-sizing:border-box;border:1px dashed #8c8c8c;"></div>
<div class="t" style="left:432px;top:409.26px;font-size:18px;line-height:18px;color:#333;font-weight:400;transform:scaleX(0.944);transform-origin:0 0;">Resolved Time:</div>
<div class="r" style="left:431.5px;top:432px;width:160px;height:28px;box-sizing:border-box;border:1px solid #b9bdd2;border-radius:2px;background:#fff;"></div>
<div class="t" style="left:437.5px;top:435.76px;font-size:18px;line-height:18px;color:#777;font-weight:400;transform:scaleX(0.933);transform-origin:0 0;">--- Select ---</div>
<svg class="r" style="left:575px;top:443px;" width="12" height="8" viewBox="0 0 12 8"><path d="M0.5 1 H11.5 L6 7.5 Z" fill="#555"/></svg>
<div class="r" style="left:608px;top:402px;width:168px;height:80px;box-sizing:border-box;border:1px dashed #8c8c8c;"></div>
<div class="t" style="left:613px;top:409.26px;font-size:18px;line-height:18px;color:#333;font-weight:400;transform:scaleX(0.944);transform-origin:0 0;">Created Time:</div>
<div class="r" style="left:612.5px;top:432px;width:160px;height:28px;box-sizing:border-box;border:1px solid #b9bdd2;border-radius:2px;background:#fff;"></div>
<div class="t" style="left:618.5px;top:435.76px;font-size:18px;line-height:18px;color:#555;font-weight:400;transform:scaleX(0.933);transform-origin:0 0;">Last 12 Month...</div>
<svg class="r" style="left:756px;top:443px;" width="12" height="8" viewBox="0 0 12 8"><path d="M0.5 1 H11.5 L6 7.5 Z" fill="#555"/></svg>
<div class="r" style="left:789px;top:402px;width:168px;height:80px;box-sizing:border-box;border:1px dashed #8c8c8c;"></div>
<div class="t" style="left:794px;top:409.26px;font-size:18px;line-height:18px;color:#333;font-weight:400;transform:scaleX(0.944);transform-origin:0 0;">Priority:</div>
<div class="r" style="left:793.5px;top:432px;width:160px;height:28px;box-sizing:border-box;border:1px solid #b9bdd2;border-radius:2px;background:#fff;"></div>
<div class="t" style="left:799.5px;top:435.76px;font-size:18px;line-height:18px;color:#777;font-weight:400;transform:scaleX(0.933);transform-origin:0 0;">--- Select ---</div>
<svg class="r" style="left:937px;top:443px;" width="12" height="8" viewBox="0 0 12 8"><path d="M0.5 1 H11.5 L6 7.5 Z" fill="#555"/></svg>
<div class="r" style="left:970px;top:402px;width:168px;height:80px;box-sizing:border-box;border:1px dashed #8c8c8c;"></div>
<div class="t" style="left:975px;top:409.26px;font-size:18px;line-height:18px;color:#333;font-weight:400;transform:scaleX(0.944);transform-origin:0 0;">User:</div>
<div class="r" style="left:974.5px;top:432px;width:160px;height:28px;box-sizing:border-box;border:1px solid #b9bdd2;border-radius:2px;background:#fff;"></div>
<div class="t" style="left:980.5px;top:435.76px;font-size:18px;line-height:18px;color:#555;font-weight:400;transform:scaleX(0.933);transform-origin:0 0;">All</div>
<svg class="r" style="left:1118px;top:443px;" width="12" height="8" viewBox="0 0 12 8"><path d="M0.5 1 H11.5 L6 7.5 Z" fill="#555"/></svg>
<div class="r" style="left:1151px;top:402px;width:168px;height:80px;box-sizing:border-box;border:1px dashed #8c8c8c;"></div>
<div class="t" style="left:1156px;top:409.26px;font-size:18px;line-height:18px;color:#333;font-weight:400;transform:scaleX(0.944);transform-origin:0 0;">Customer Domain:</div>
<div class="r" style="left:1155.5px;top:432px;width:160px;height:28px;box-sizing:border-box;border:1px solid #b9bdd2;border-radius:2px;background:#fff;"></div>
<div class="t" style="left:1161.5px;top:435.76px;font-size:18px;line-height:18px;color:#777;font-weight:400;transform:scaleX(0.933);transform-origin:0 0;">--- Select ---</div>
<svg class="r" style="left:1299px;top:443px;" width="12" height="8" viewBox="0 0 12 8"><path d="M0.5 1 H11.5 L6 7.5 Z" fill="#555"/></svg>
<div class="r" style="left:421px;top:510px;width:165px;height:25px;box-sizing:border-box;background:#f0f0f0;border-right:1px solid #c8c8c8;border-top:1px solid #e2e2e2;"></div>
<svg class="r" style="left:430px;top:516px;" width="14" height="14" viewBox="0 0 14 14"><path d="M7 1 V13 M1 7 H13" stroke="#666" stroke-width="1.3"/></svg>
<div class="t" style="left:449.2px;top:515.06px;font-size:18px;line-height:18px;color:#3a7ad6;font-weight:400;transform:scaleX(0.95);transform-origin:0 0;">Add User Filters</div>
<div class="r" style="left:418px;top:545px;width:307px;height:179px;background:#fff;border-radius:7px;box-shadow:0 3px 6px rgba(40,50,60,.17);"></div>
<div class="r" style="left:733px;top:545px;width:251px;height:179px;background:#fff;border-radius:7px;box-shadow:0 3px 6px rgba(40,50,60,.17);"></div>
<div class="r" style="left:992px;top:545px;width:288px;height:179px;background:#fff;border-radius:7px;box-shadow:0 3px 6px rgba(40,50,60,.17);"></div>
<div class="r" style="left:1288px;top:545px;width:307px;height:179px;background:#fff;border-radius:7px;box-shadow:0 3px 6px rgba(40,50,60,.17);"></div>
<div class="r" style="left:1603px;top:545px;width:287px;height:179px;background:#fff;border-radius:7px;box-shadow:0 3px 6px rgba(40,50,60,.17);"></div>
<div class="t" style="left:466.7px;top:571.97px;font-size:20px;line-height:20px;color:#777;font-weight:400;">Satisfaction Rate</div>
<div class="t" style="left:466px;top:608.66px;font-size:61px;line-height:61px;color:#000;font-weight:400;letter-spacing:-0.7px;">76.7%</div>
<svg class="r" style="left:646px;top:620px;" width="28" height="42" viewBox="0 0 28 42"><path d="M14 41 V2.5 M2 15 L14 2.5 L26 15" fill="none" stroke="#b2e25a" stroke-width="3.2"/></svg>
<div class="t" style="left:550.4px;top:681.21px;font-size:17px;line-height:17px;color:#777;font-weight:400;letter-spacing:-0.4px;">May 2024: 75.5%</div>
<div class="t" style="left:747.3px;top:571.97px;font-size:20px;line-height:20px;color:#777;font-weight:400;">Resolved This Month</div>
<div class="t" style="left:747px;top:608.66px;font-size:61px;line-height:61px;color:#000;font-weight:400;letter-spacing:-0.6px;">191.00</div>
<svg class="r" style="left:939px;top:622px;" width="28" height="42" viewBox="0 0 28 42"><path d="M14 1 V39.5 M2 27 L14 39.5 L26 27" fill="none" stroke="#e63248" stroke-width="3.2"/></svg>
<div class="t" style="left:840.2px;top:681.21px;font-size:17px;line-height:17px;color:#777;font-weight:400;letter-spacing:-0.4px;">May 2024: 592.00</div>
<div class="t" style="left:1136px;transform:translateX(-50%);top:585.57px;font-size:20px;line-height:20px;color:#777;font-weight:400;">Avg First Reply Time (hrs)</div>
<div class="t" style="left:1136px;transform:translateX(-50%);top:621.33px;font-size:60.8px;line-height:60.8px;color:#000;font-weight:400;">64.56</div>
<div class="t" style="left:1441.5px;transform:translateX(-50%);top:585.57px;font-size:20px;line-height:20px;color:#777;font-weight:400;">Average Resolution Time (hrs)</div>
<div class="t" style="left:1441.5px;transform:translateX(-50%);top:621.42px;font-size:60.7px;line-height:60.7px;color:#000;font-weight:400;">232.15</div>
<div class="t" style="left:1746.5px;transform:translateX(-50%);top:585.57px;font-size:20px;line-height:20px;color:#777;font-weight:400;">Solved in &lt; 2 hrs</div>
<div class="t" style="left:1746.5px;transform:translateX(-50%);top:622.21px;font-size:60px;line-height:60px;color:#000;font-weight:400;">58.00</div>
<div class="r" style="left:418px;top:732px;width:1472px;height:140px;background:#fff;border-radius:7px;box-shadow:0 3px 6px rgba(40,50,60,.17);"></div>
<div class="r" style="left:418px;top:790px;width:1472px;height:1px;background:#eeeeee;"></div>
<div class="t" style="left:438.2px;top:753.79px;font-size:18.8px;line-height:18.8px;color:#111;font-weight:700;transform:scaleX(0.926);transform-origin:0 0;">Support Team Performance</div>
<div class="r" style="left:436px;top:810px;width:20px;height:20px;background:#7fd3b0;"></div>
<svg class="r" style="left:436px;top:810px;" width="20" height="20" viewBox="0 0 20 20"><path d="M5 10.5 L8.5 15 L15 4.5" fill="none" stroke="#fff" stroke-width="1.5"/></svg>
<div class="t" style="left:460.6px;top:812.31px;font-size:17px;line-height:17px;color:#222;font-weight:400;transform:scaleX(0.924);transform-origin:0 0;">Avg First Reply Time (hrs)</div>
<div class="r" style="left:651px;top:810px;width:20px;height:20px;background:#8b97e0;"></div>
<svg class="r" style="left:651px;top:810px;" width="20" height="20" viewBox="0 0 20 20"><path d="M5 10.5 L8.5 15 L15 4.5" fill="none" stroke="#fff" stroke-width="1.5"/></svg>
<div class="t" style="left:675.3px;top:812.31px;font-size:17px;line-height:17px;color:#222;font-weight:400;transform:scaleX(0.924);transform-origin:0 0;">Avg Resolution time (hrs)</div>
<div class="r" style="left:0px;top:860px;width:1924px;height:2px;background:#000;"></div>
<div class="r" style="left:1922px;top:0px;width:2px;height:862px;background:#000;"></div>
</body></html>
